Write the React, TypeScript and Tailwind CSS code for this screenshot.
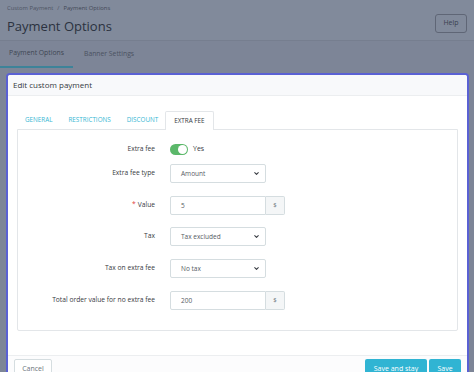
import { ChevronDown } from "lucide-react";

const tabs = ["General", "Restrictions", "Discount"];

function Select({ value }: { value: string }) {
  return (
    <div className="flex h-[19px] w-[96px] items-center justify-between rounded-[2px] border border-[#d5dde0] bg-white pl-[10px] pr-[5px] text-[6.5px] text-[#555b63]">
      <span>{value}</span>
      <ChevronDown className="h-[7px] w-[7px] text-[#363a41]" strokeWidth={3.5} />
    </div>
  );
}

function AddonInput({ value }: { value: string }) {
  return (
    <div className="flex h-[19px] items-stretch">
      <div className="flex w-[96px] items-center rounded-l-[2px] border border-[#d5dde0] bg-white pl-[10px] text-[6.5px] text-[#555b63]">
        {value}
      </div>
      <div className="flex w-[19px] items-center justify-center rounded-r-[2px] border border-l-0 border-[#d5dde0] bg-[#f4f6f7] text-[6px] text-[#6c757d]">
        $
      </div>
    </div>
  );
}

function Row({
  label,
  required,
  className,
  children,
}: {
  label: string;
  required?: boolean;
  className: string;
  children: React.ReactNode;
}) {
  return (
    <div className={`flex items-center ${className}`}>
      <div className="w-[138px] pr-[1px] text-right text-[6.7px] text-[#363a41]">
        {required && <span className="mr-[2px] text-[#e2413c]">*</span>}
        {label}
      </div>
      <div className="ml-[14px] flex items-center">{children}</div>
    </div>
  );
}

export default function App() {
  return (
    <div
      className="relative h-[372px] w-[474px] overflow-hidden bg-[#7d8597]"
      style={{ fontFamily: '"Open Sans", "Noto Sans", sans-serif' }}
    >
      {/* page header under the overlay */}
      <div className="flex h-[41px] items-start justify-between border-b border-[#767e8f] bg-[#818a9b] pl-[7px] pr-[7px]">
        <div>
          <div className="mt-[4px] flex items-center gap-[4px] text-[5.8px] text-[#414856]">
            <span className="opacity-80">Custom Payment</span>
            <span className="opacity-80">/</span>
            <span>Payment Options</span>
          </div>
          <h1 className="mt-[3px] text-[13px] leading-[20px] text-[#2b3240]">Payment Options</h1>
        </div>
        <button className="mt-[14px] h-[19px] w-[32px] rounded-[3px] border border-[#5f6676] text-[7px] text-[#3a4150]">
          Help
        </button>
      </div>

      <div className="flex h-[27px] items-stretch bg-[#7d8597] text-[6.8px] text-[#3e4553]">
        <div className="flex w-[73px] items-center justify-center border-b-2 border-[#3d8399] font-medium">
          Payment Options
        </div>
        <div className="ml-[11px] flex items-center text-[#4b5261]">Banner Settings</div>
      </div>

      {/* modal */}
      <div className="mt-[5px] ml-[6px] mr-[5px] rounded-t-[4px] border-2 border-[#5a61d4] bg-white">
        <div className="flex h-[21px] items-center rounded-t-[3px] border-b border-[#eceef0] bg-[#f8f9fb] px-[5px] text-[8px] text-[#363a41]">
          Edit custom payment
        </div>

        <div className="px-[9px] pt-[14px] pb-[24px]">
          <div className="flex h-[19px] items-end text-[6.3px] uppercase">
            {tabs.map((t) => (
              <div key={t} className="flex h-[18px] items-center px-[8px] text-[#36b7d4]">
                {t}
              </div>
            ))}
            <div className="relative -mb-px ml-[-1px] flex h-[19px] items-center rounded-t-[2px] border border-b-0 border-[#e3e6e9] bg-white px-[8px] text-[#363a41]">
              Extra fee
            </div>
          </div>

          <div className="flex flex-col rounded-b-[2px] border border-[#e3e6e9] pt-[13px] pb-[20px]">
            <Row label="Extra fee" className="h-[12px]">
              <div className="flex h-[11px] w-[18px] items-center justify-end rounded-full bg-[#5bb86a] pr-[1px]">
                <div className="h-[9px] w-[9px] rounded-full bg-white" />
              </div>
              <span className="ml-[5px] text-[7px] text-[#363a41]">Yes</span>
            </Row>
            <Row label="Extra fee type" className="mt-[9px] h-[19px]">
              <Select value="Amount" />
            </Row>
            <Row label="Value" required className="mt-[13px] h-[19px]">
              <AddonInput value="5" />
            </Row>
            <Row label="Tax" className="mt-[12px] h-[19px]">
              <Select value="Tax excluded" />
            </Row>
            <Row label="Tax on extra fee" className="mt-[13px] h-[19px]">
              <Select value="No tax" />
            </Row>
            <Row label="Total order value for no extra fee" className="mt-[13px] h-[19px]">
              <AddonInput value="200" />
            </Row>
          </div>
        </div>

        <div className="flex items-start justify-between border-t border-[#eceef0] bg-[#fcfcfd] px-[6px] pt-[3px] pb-[10px]">
          <button className="h-[20px] w-[38px] rounded-[2px] border border-[#d5dde0] bg-white text-[7px] text-[#6c757d]">
            Cancel
          </button>
          <div className="flex gap-[2px]">
            <button className="h-[20px] w-[62px] rounded-[2px] bg-[#30b4d3] text-[7px] text-white">
              Save and stay
            </button>
            <button className="h-[20px] w-[32px] rounded-[2px] bg-[#30b4d3] text-[7px] text-white">
              Save
            </button>
          </div>
        </div>
      </div>
    </div>
  );
}
